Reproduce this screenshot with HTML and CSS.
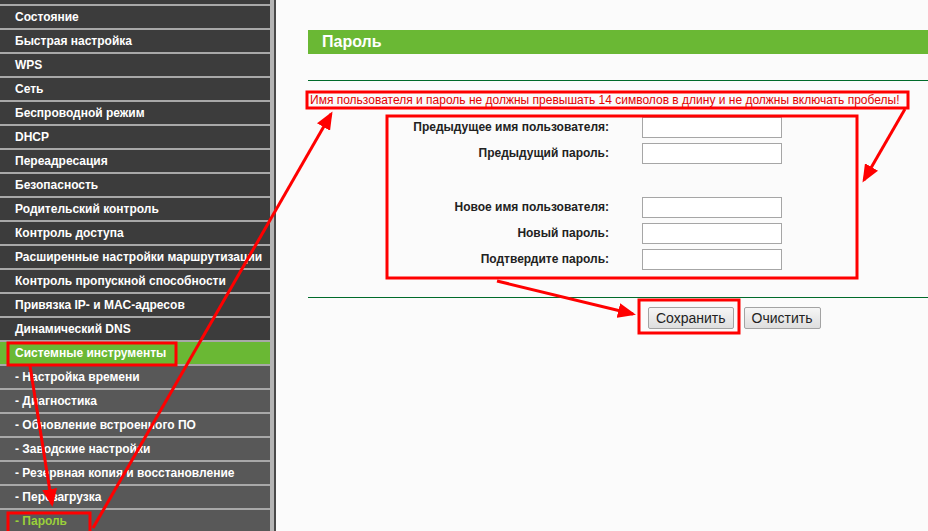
FILE: index.html
```html
<!DOCTYPE html>
<html lang="ru">
<head>
  <meta charset="UTF-8" />
  <title>Пароль</title>
  <link rel="stylesheet" href="styles.css">
</head>
<body>
  <nav class="menu">
    <div class="menu-top"></div>
    <a class="item">Состояние</a>
    <a class="item">Быстрая настройка</a>
    <a class="item">WPS</a>
    <a class="item">Сеть</a>
    <a class="item">Беспроводной режим</a>
    <a class="item">DHCP</a>
    <a class="item">Переадресация</a>
    <a class="item">Безопасность</a>
    <a class="item">Родительский контроль</a>
    <a class="item">Контроль доступа</a>
    <a class="item">Расширенные настройки маршрутизации</a>
    <a class="item">Контроль пропускной способности</a>
    <a class="item">Привязка IP- и MAC-адресов</a>
    <a class="item">Динамический DNS</a>
    <a class="item active">Системные инструменты</a>
    <a class="item sub">- Настройка времени</a>
    <a class="item sub">- Диагностика</a>
    <a class="item sub">- Обновление встроенного ПО</a>
    <a class="item sub">- Заводские настройки</a>
    <a class="item sub">- Резервная копия и восстановление</a>
    <a class="item sub">- Перезагрузка</a>
    <a class="item sub current">- Пароль</a>
  </nav>

  <main class="content">
    <div class="title-bar">Пароль</div>
    <div class="rule"></div>
    <p class="warning">Имя пользователя и пароль не должны превышать 14 символов в длину и не должны включать пробелы!</p>

    <form class="pass-form">
      <label>Предыдущее имя пользователя:</label>
      <input type="text">
      <label>Предыдущий пароль:</label>
      <input type="password">
      <div class="spacer"></div>
      <label>Новое имя пользователя:</label>
      <input type="text">
      <label>Новый пароль:</label>
      <input type="password">
      <label>Подтвердите пароль:</label>
      <input type="password">
    </form>

    <div class="rule bottom"></div>
    <div class="actions">
      <button type="button">Сохранить</button>
      <button type="button">Очистить</button>
    </div>
  </main>

  <!-- red annotation marks drawn over the screenshot -->
  <svg class="marks" width="928" height="531" viewBox="0 0 928 531">
    <defs>
      <marker id="head" markerWidth="6" markerHeight="5" refX="5" refY="2.5" orient="auto" markerUnits="strokeWidth">
        <polygon points="0,0 6,2.5 0,5" fill="#f00"/>
      </marker>
    </defs>
    <g fill="none" stroke="#f00" stroke-width="3">
      <rect x="307" y="92" width="601" height="16"/>
      <rect x="387" y="116" width="470" height="162"/>
      <rect x="639" y="300" width="100" height="33"/>
      <rect x="8" y="343" width="168" height="22"/>
      <rect x="8" y="513" width="82" height="24"/>
      <line x1="93" y1="528" x2="331" y2="114" marker-end="url(#head)"/>
      <line x1="30" y1="366" x2="52" y2="504" marker-end="url(#head)"/>
      <line x1="905" y1="109" x2="864" y2="180" marker-end="url(#head)"/>
      <line x1="497" y1="281" x2="633" y2="314" marker-end="url(#head)"/>
    </g>
  </svg>
</body>
</html>
```

FILE: styles.css
```css
html, body {
  height: 531px;
  overflow: hidden;
}
body {
  margin: 0;
  display: flex;
  position: relative;
  font-family: "Liberation Sans", Arial, sans-serif;
  background: #fbfbfb;
  color: #333;
}

/* left menu */
.menu {
  width: 270px;
  flex: none;
  background: #3c3c3c;
  border-right: 4px solid #b4b4b4;
  box-shadow: 2px 0 0 #4a4a4a;
}
.menu-top {
  height: 4px;
}
.item {
  display: block;
  height: 22px;
  line-height: 22px;
  border-top: 2px solid #a8a8a8;
  padding-left: 15px;
  font-size: 12px;
  font-weight: bold;
  color: #fff;
  white-space: nowrap;
  overflow: hidden;
}
.item.active {
  background: #6ab834;
}
.item.sub {
  background: #585858;
}
.item.current {
  color: #9bd03a;
}

/* main */
.content {
  flex: 1;
  margin-left: 2px;
  padding-left: 32px;
  padding-top: 30px;
}
.title-bar {
  height: 24px;
  line-height: 24px;
  background: #6ab834;
  color: #fff;
  font-size: 16px;
  font-weight: bold;
  padding-left: 14px;
}
.rule {
  height: 1px;
  margin-top: 26px;
  background: #006b2a;
}
.rule.bottom {
  margin-top: 27px;
}
.warning {
  margin: 11px 0 0 2px;
  line-height: 16px;
  font-size: 12px;
  color: #e30000;
  white-space: nowrap;
}
.pass-form {
  display: grid;
  grid-template-columns: 301px 140px;
  column-gap: 33px;
  row-gap: 5px;
  margin-top: 9px;
}
.pass-form label {
  text-align: right;
  font-size: 12px;
  font-weight: bold;
  color: #222;
  line-height: 21px;
}
.pass-form input {
  box-sizing: border-box;
  width: 140px;
  height: 21px;
  margin: 0;
  border: 1px solid #a6a6a6;
  background: #fff;
}
.spacer {
  grid-column: 1 / 3;
  height: 23px;
}
.actions {
  display: flex;
  gap: 10px;
  padding-left: 340px;
  margin-top: 9px;
}
.actions button {
  height: 22px;
  padding: 0 7px;
  font-family: "Liberation Sans", Arial, sans-serif;
  font-size: 14px;
  color: #222;
  background: linear-gradient(#f6f6f6, #dedede);
  border: 1px solid #a3a3a3;
  border-radius: 2px;
}

.marks {
  position: absolute;
  left: 0;
  top: 0;
  pointer-events: none;
}
```
